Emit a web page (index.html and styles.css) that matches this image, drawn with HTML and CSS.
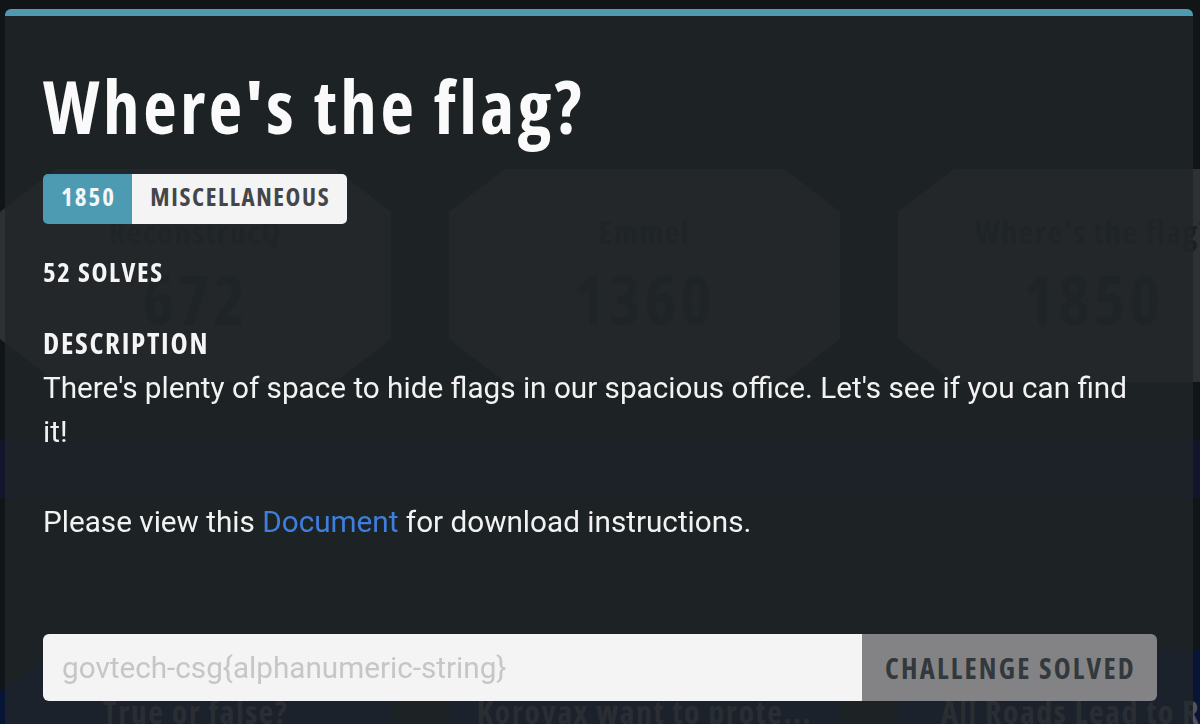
FILE: index.html
```html
<!DOCTYPE html>
<html lang="en">
<head>
<meta charset="utf-8">
<title>Where's the flag?</title>
<link rel="stylesheet" href="styles.css">
</head>
<body>
<div class="board">
  <div class="row">
    <div class="card"><div class="card-name">ReconstrucQ</div><div class="card-value">672</div></div>
    <div class="card"><div class="card-name">Emmel</div><div class="card-value">1360</div></div>
    <div class="card"><div class="card-name">Where's the flag?</div><div class="card-value">1850</div></div>
  </div>
  <div class="band"></div>
  <div class="row row-solved">
    <div class="card"><div class="card-name">True or false?</div><div class="card-value">500</div></div>
    <div class="card"><div class="card-name">Korovax want to prote...</div><div class="card-value">800</div></div>
    <div class="card"><div class="card-name">All Roads Lead to Ro...</div><div class="card-value">900</div></div>
  </div>
</div>

<div class="modal">
  <div class="modal-body">
    <h1 class="title">Where's the flag?</h1>
    <div class="badge"><span class="badge-value">1850</span><span class="badge-cat">MISCELLANEOUS</span></div>
    <div class="solves">52 SOLVES</div>
    <h2 class="desc-head">DESCRIPTION</h2>
    <div class="desc">
      <p>There's plenty of space to hide flags in our spacious office. Let's see if you can find it!</p>
      <p>Please view this <a href="#" class="link">Document</a> for download instructions.</p>
    </div>
    <form class="flag-form">
      <input class="flag-input" type="text" placeholder="govtech-csg{alphanumeric-string}">
      <button class="flag-btn" type="button">CHALLENGE SOLVED</button>
    </form>
  </div>
</div>
</body>
</html>
```

FILE: styles.css
```css
html, body {
  margin: 0;
  padding: 0;
  height: 100%;
  overflow: hidden;
}
body {
  background: #121518;
  font-family: Roboto, "Liberation Sans", sans-serif;
}

/* background board */
.board {
  padding-top: 169px;
  width: 1400px;
}
.row {
  display: flex;
  gap: 58px;
}
.card {
  flex: 0 0 391px;
  height: 213px;
  background: #2f3033;
  clip-path: polygon(56px 0, calc(100% - 56px) 0, 100% 43px, 100% calc(100% - 43px), calc(100% - 56px) 100%, 56px 100%, 0 calc(100% - 43px), 0 43px);
  color: #1c1f22;
  font-family: "Open Sans", "DejaVu Sans Condensed", sans-serif;
  font-stretch: 75%;
  font-weight: 700;
  text-align: center;
  padding-top: 44px;
  box-sizing: border-box;
  overflow: hidden;
}
.card-name {
  font-size: 32px;
  line-height: 38px;
  letter-spacing: 1.5px;
  white-space: nowrap;
}
.card-value {
  font-size: 68px;
  line-height: 68px;
  letter-spacing: 3.5px;
  margin-top: 14px;
}
.band {
  height: 58px;
  margin-top: 58px;
  background: #11162d;
}
.row-solved {
  margin-top: 151px;
}
.row-solved .card {
  background: #071637;
  color: #52525f;
}

/* modal */
.modal {
  position: fixed;
  left: 5px;
  right: 7px;
  top: 9px;
  bottom: -40px;
  border-top: 7px solid #4e9bb1;
  border-radius: 6px 6px 0 0;
  background: rgba(32, 37, 40, 0.8);
}
.modal-body {
  padding: 53px 36px 0 38px;
}
.title {
  margin: 0 0 32px;
  font-family: "Open Sans", "DejaVu Sans Condensed", sans-serif;
  font-stretch: 75%;
  font-weight: 700;
  font-size: 73px;
  line-height: 73px;
  letter-spacing: 3.5px;
  color: #fafafa;
}
.badge {
  display: inline-flex;
  height: 50px;
  border-radius: 5px;
  overflow: hidden;
  font-family: "Open Sans", "DejaVu Sans Condensed", sans-serif;
  font-stretch: 75%;
  font-weight: 700;
  font-size: 25px;
  line-height: 45px;
  vertical-align: top;
}
.badge-value {
  width: 89px;
  text-align: center;
  background: #4d9bb2;
  color: #f4f6f7;
  letter-spacing: 2px;
  text-indent: 2px;
}
.badge-cat {
  width: 215px;
  text-align: center;
  background: #f4f4f4;
  color: #444649;
  letter-spacing: 1.6px;
  text-indent: 1.6px;
}
.solves {
  margin-top: 32px;
  font-family: "Open Sans", "DejaVu Sans Condensed", sans-serif;
  font-stretch: 75%;
  font-weight: 700;
  font-size: 27px;
  line-height: 32px;
  letter-spacing: 1.6px;
  color: #f5f5f5;
}
.desc-head {
  margin: 37px 0 0;
  font-family: "Open Sans", "DejaVu Sans Condensed", sans-serif;
  font-stretch: 75%;
  font-weight: 700;
  font-size: 29px;
  line-height: 35px;
  letter-spacing: 1.7px;
  color: #f5f5f5;
}
.desc {
  margin-top: 6px;
  max-width: 1100px;
  font-size: 29.7px;
  line-height: 44px;
  color: #f2f2f2;
}
.desc p {
  margin: 0 0 46px;
}
.desc p:last-child {
  margin-bottom: 0;
}
.link {
  color: #3e7fdd;
  text-decoration: none;
}
.flag-form {
  display: flex;
  width: 1114px;
  height: 67px;
  margin-top: 90px;
}
.flag-input {
  flex: 1;
  min-width: 0;
  border: none;
  outline: none;
  margin: 0;
  padding: 0 19px;
  background: #f4f4f4;
  border-radius: 6px 0 0 6px;
  font-family: Roboto, sans-serif;
  font-size: 29.7px;
  color: #333;
}
.flag-input::placeholder {
  color: #c6c6c6;
}
.flag-btn {
  flex: 0 0 295px;
  border: none;
  margin: 0;
  padding: 0 0 0 2px;
  background: #838386;
  color: #33383c;
  border-radius: 0 6px 6px 0;
  font-family: "Open Sans", "DejaVu Sans Condensed", sans-serif;
  font-stretch: 75%;
  font-weight: 700;
  font-size: 28.5px;
  letter-spacing: 2.2px;
}
```
